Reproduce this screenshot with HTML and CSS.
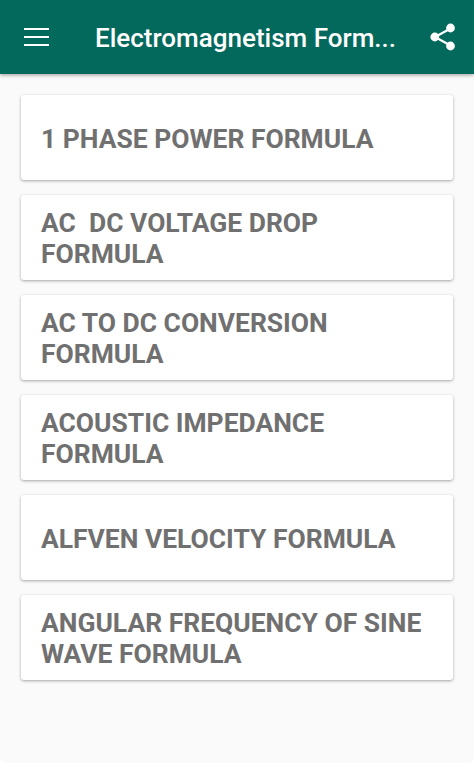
FILE: index.html
```html
<!DOCTYPE html>
<html lang="en">
<head>
<meta charset="utf-8">
<title>Electromagnetism Formulas</title>
<link rel="stylesheet" href="styles.css">
</head>
<body>
<div class="screen">
  <header class="appbar">
    <svg class="menu-icon" viewBox="0 0 25 20" width="25" height="20" aria-hidden="true">
      <path d="M0 2h25M0 10h25M0 18h25" stroke="#fff" stroke-width="2.2" fill="none"/>
    </svg>
    <h1 class="title">Electromagnetism Form...</h1>
    <svg class="share-icon" viewBox="0 0 26 28" width="26" height="28" aria-hidden="true">
      <path d="M20.5 5.5 5 14l15.5 8.5" stroke="#fff" stroke-width="2.2" fill="none"/>
      <circle cx="20.5" cy="5" r="4.4" fill="#fff"/>
      <circle cx="4.8" cy="14" r="4.4" fill="#fff"/>
      <circle cx="20.5" cy="23" r="4.4" fill="#fff"/>
    </svg>
  </header>
  <main class="list">
    <div class="card">1 PHASE POWER FORMULA</div>
    <div class="card">AC&nbsp; DC VOLTAGE DROP FORMULA</div>
    <div class="card">AC TO DC CONVERSION FORMULA</div>
    <div class="card">ACOUSTIC IMPEDANCE FORMULA</div>
    <div class="card">ALFVEN VELOCITY FORMULA</div>
    <div class="card">ANGULAR FREQUENCY OF SINE WAVE FORMULA</div>
  </main>
</div>
</body>
</html>
```
FILE: styles.css
```css
html, body {
  margin: 0;
  padding: 0;
  background: #fff;
}
.screen {
  width: 474px;
  height: 763px;
  background: #fafafa;
  border-radius: 0 0 6px 6px;
  overflow: hidden;
  font-family: Roboto, "Liberation Sans", sans-serif;
}
.appbar {
  height: 74px;
  background: #03695c;
  box-shadow: 0 1px 4px rgba(0, 0, 0, 0.4);
  display: flex;
  align-items: center;
  padding: 0 18px 0 24px;
  box-sizing: border-box;
  position: relative;
}
.menu-icon {
  flex: none;
}
.title {
  margin: 1px 0 0 46px;
  flex: 1;
  font-size: 26px;
  font-weight: 500;
  color: #fff;
  white-space: nowrap;
}
.share-icon {
  flex: none;
}
.list {
  padding: 21px 21px 0;
  display: flex;
  flex-direction: column;
  gap: 15px;
}
.card {
  height: 85px;
  box-sizing: border-box;
  padding: 1px 20px 0;
  background: #fff;
  border-radius: 3px;
  box-shadow: 0 1px 3px rgba(0, 0, 0, 0.35);
  display: flex;
  align-items: center;
  font-size: 26.45px;
  font-weight: 700;
  line-height: 31px;
  color: #707070;
}
```
